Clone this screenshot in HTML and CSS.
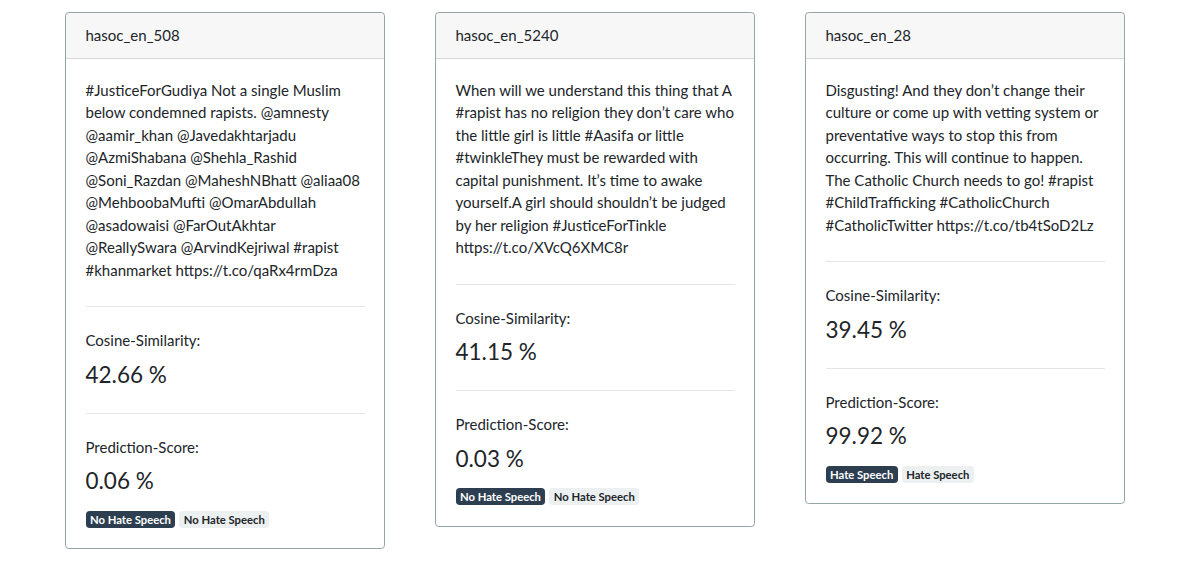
FILE: index.html
```html
<!DOCTYPE html>
<html lang="en">
<head>
<meta charset="utf-8">
<title>Results</title>
<link rel="stylesheet" href="styles.css">
</head>
<body>
<div class="row">
  <div class="card">
    <div class="card-header">hasoc_en_508</div>
    <div class="card-body">
      <p class="tweet">#JusticeForGudiya Not a single Muslim below condemned rapists. @amnesty @aamir_khan @Javedakhtarjadu @AzmiShabana @Shehla_Rashid @Soni_Razdan @MaheshNBhatt @aliaa08 @MehboobaMufti @OmarAbdullah @asadowaisi @FarOutAkhtar @ReallySwara @ArvindKejriwal #rapist #khanmarket https://t.co/qaRx4rmDza</p>
      <hr>
      <div class="label">Cosine-Similarity:</div>
      <div class="value">42.66 %</div>
      <hr>
      <div class="label">Prediction-Score:</div>
      <div class="value">0.06 %</div>
      <div class="badges"><span class="badge badge-primary">No Hate Speech</span> <span class="badge badge-light">No Hate Speech</span></div>
    </div>
  </div>
  <div class="card">
    <div class="card-header">hasoc_en_5240</div>
    <div class="card-body">
      <p class="tweet">When will we understand this thing that A #rapist has no religion they don’t care who the little girl is little #Aasifa or little #twinkleThey must be rewarded with capital punishment. It’s time to awake yourself.A girl should shouldn’t be judged by her religion #JusticeForTinkle https://t.co/XVcQ6XMC8r</p>
      <hr>
      <div class="label">Cosine-Similarity:</div>
      <div class="value">41.15 %</div>
      <hr>
      <div class="label">Prediction-Score:</div>
      <div class="value">0.03 %</div>
      <div class="badges"><span class="badge badge-primary">No Hate Speech</span> <span class="badge badge-light">No Hate Speech</span></div>
    </div>
  </div>
  <div class="card">
    <div class="card-header">hasoc_en_28</div>
    <div class="card-body">
      <p class="tweet">Disgusting! And they don’t change their culture or come up with vetting system or preventative ways to stop this from occurring. This will continue to happen. The Catholic Church needs to go! #rapist #ChildTrafficking #CatholicChurch #CatholicTwitter https://t.co/tb4tSoD2Lz</p>
      <hr>
      <div class="label">Cosine-Similarity:</div>
      <div class="value">39.45 %</div>
      <hr>
      <div class="label">Prediction-Score:</div>
      <div class="value">99.92 %</div>
      <div class="badges"><span class="badge badge-primary">Hate Speech</span> <span class="badge badge-light">Hate Speech</span></div>
    </div>
  </div>
</div>
</body>
</html>
```
FILE: styles.css
```css
* { box-sizing: border-box; }
html, body { margin: 0; padding: 0; background: #fff; }
body {
  font-family: Lato, "Liberation Sans", sans-serif;
  font-size: 15px;
  line-height: 1.5;
  color: #212529;
}
.row {
  display: flex;
  align-items: flex-start;
  gap: 50px;
  padding: 12px 0 0 65px;
}
.card {
  width: 320px;
  border: 1px solid #95a5a6;
  border-radius: 3.75px;
  background: #fff;
  overflow: hidden;
}
.card-header {
  padding: 11.25px 18.75px 11.25px 19.5px;
  background: rgba(0,0,0,.03);
  border-bottom: 1px solid rgba(0,0,0,.125);
}
.card-body {
  padding: 19.5px 18.75px 20.5px 19.5px;
}
.tweet {
  margin: 0;
}
hr {
  border: 0;
  border-top: 1px solid rgba(0,0,0,.1);
  margin: 25px 0 22px;
}
.label {
  margin: 0;
}
.value {
  font-size: 22.5px;
  line-height: 27px;
  margin-top: 9px;
}
.badges {
  margin-top: 16.5px;
  line-height: 1;
}
.badge {
  display: inline-block;
  font-size: 11.25px;
  font-weight: 700;
  line-height: 1;
  padding: 3px 4.5px;
  border-radius: 3.75px;
  white-space: nowrap;
  vertical-align: baseline;
}
.badge-primary { background: #2c3e50; color: #fff; }
.badge-light { background: #ecf0f1; color: #212529; }
```
